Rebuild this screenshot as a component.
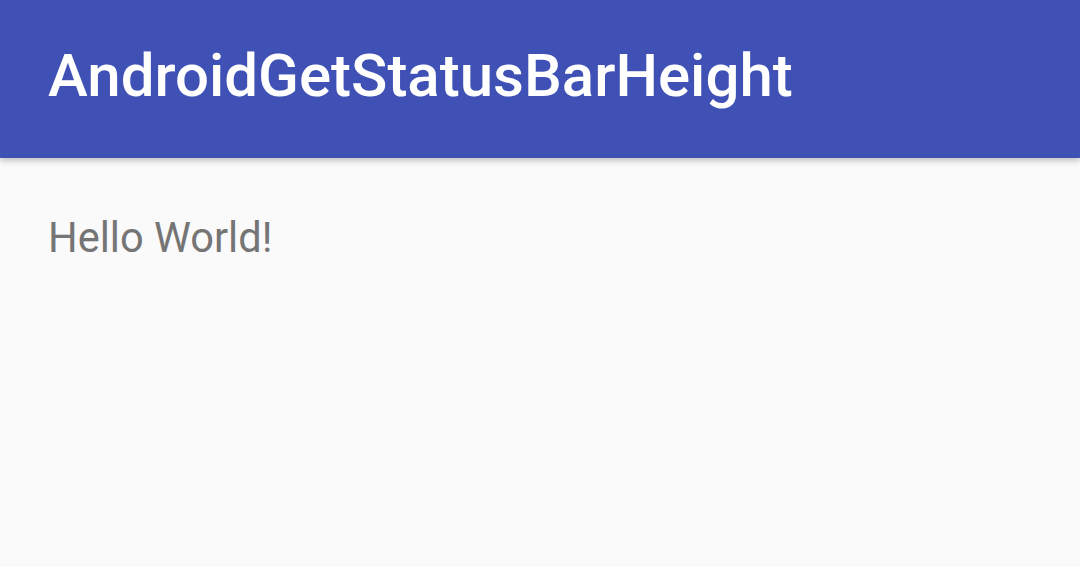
import React from 'react';

const App = () => {
  return (
    <div className="min-h-[567px] h-[567px] bg-[#fafafa] overflow-hidden" style={{ fontFamily: 'Roboto, sans-serif' }}>
      {/* Toolbar */}
      <header className="relative z-10 h-[158px] bg-[#3f51b5] pl-[48px] pt-[46px] shadow-[0_3px_6px_rgba(0,0,0,0.22)]">
        <h1 className="text-[60px] leading-none font-medium text-white">AndroidGetStatusBarHeight</h1>
      </header>

      {/* Content */}
      <main className="pl-[48px] pt-[59px]">
        <p className="text-[41.6px] leading-none text-[#757575]">Hello World!</p>
      </main>
    </div>
  );
};

export default App;
